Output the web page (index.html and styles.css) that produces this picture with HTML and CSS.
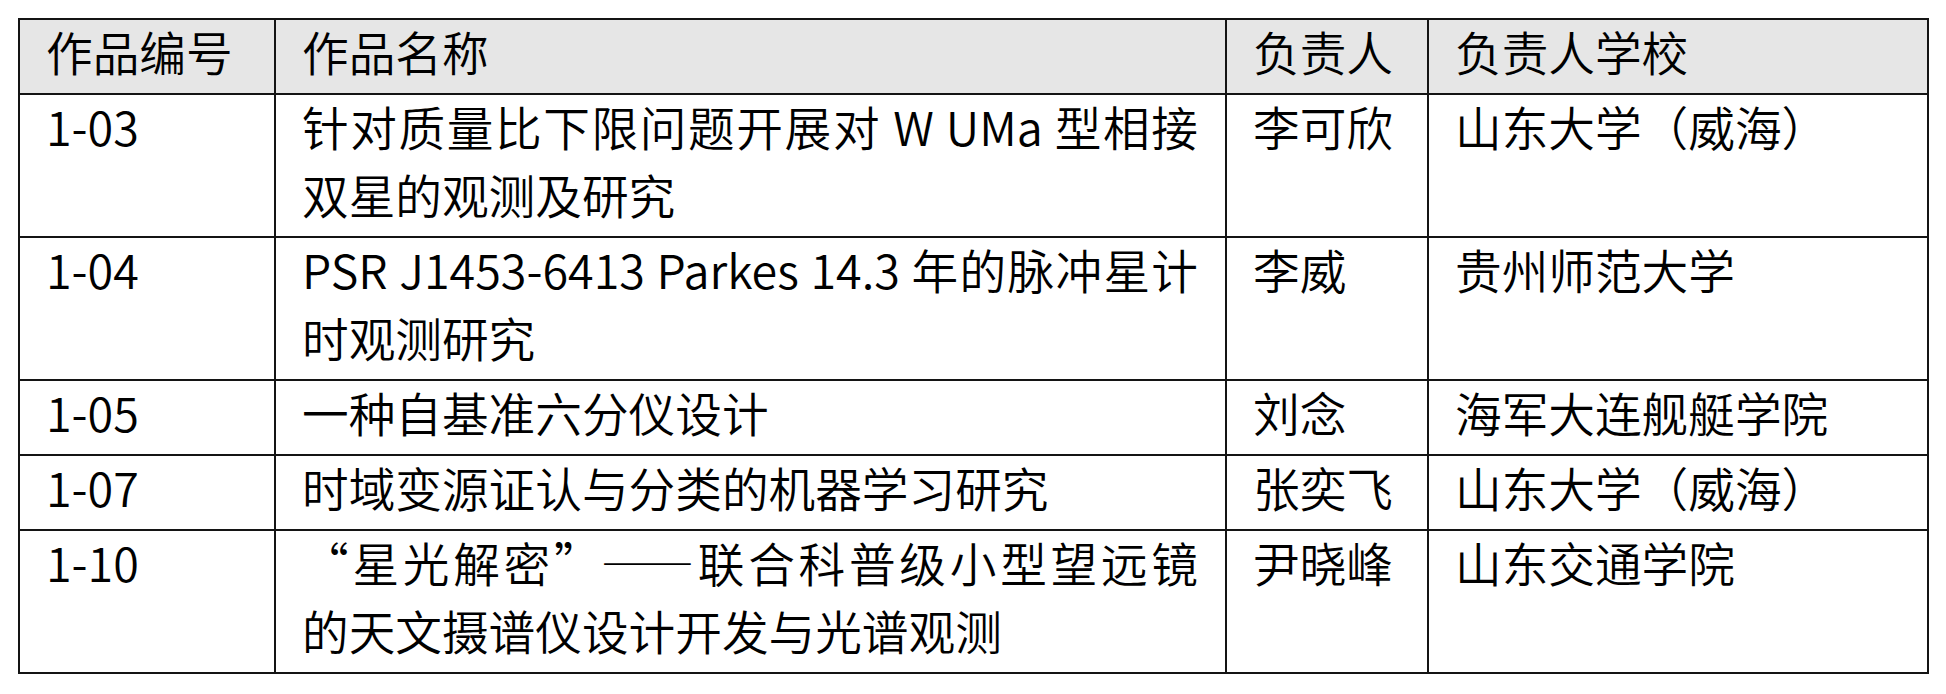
FILE: index.html
```html
<!DOCTYPE html>
<html lang="zh-CN">
<head>
<meta charset="utf-8">
<title>作品列表</title>
<link rel="stylesheet" href="styles.css">
</head>
<body>
<div class="table" role="table">
  <div class="cell head" role="columnheader"><div class="txt">作品编号</div></div>
  <div class="cell head" role="columnheader"><div class="txt">作品名称</div></div>
  <div class="cell head" role="columnheader"><div class="txt">负责人</div></div>
  <div class="cell head" role="columnheader"><div class="txt">负责人学校</div></div>

  <div class="cell"><div class="txt">1-03</div></div>
  <div class="cell"><div class="txt"><span class="jline">针对质量比下限问题开展对 W UMa 型相接</span><span class="line">双星的观测及研究</span></div></div>
  <div class="cell"><div class="txt">李可欣</div></div>
  <div class="cell"><div class="txt">山东大学（威海）</div></div>

  <div class="cell"><div class="txt">1-04</div></div>
  <div class="cell"><div class="txt"><span class="jline">PSR J1453-6413 Parkes 14.3 年的脉冲星计</span><span class="line">时观测研究</span></div></div>
  <div class="cell"><div class="txt">李威</div></div>
  <div class="cell"><div class="txt">贵州师范大学</div></div>

  <div class="cell"><div class="txt">1-05</div></div>
  <div class="cell"><div class="txt">一种自基准六分仪设计</div></div>
  <div class="cell"><div class="txt">刘念</div></div>
  <div class="cell"><div class="txt">海军大连舰艇学院</div></div>

  <div class="cell"><div class="txt">1-07</div></div>
  <div class="cell"><div class="txt">时域变源证认与分类的机器学习研究</div></div>
  <div class="cell"><div class="txt">张奕飞</div></div>
  <div class="cell"><div class="txt">山东大学（威海）</div></div>

  <div class="cell"><div class="txt">1-10</div></div>
  <div class="cell"><div class="txt"><span class="jline"><span class="fw">“</span>星光解密<span class="fw">”</span>——联合科普级小型望远镜</span><span class="line">的天文摄谱仪设计开发与光谱观测</span></div></div>
  <div class="cell"><div class="txt">尹晓峰</div></div>
  <div class="cell"><div class="txt">山东交通学院</div></div>
</div>
</body>
</html>
```
FILE: styles.css
```css
html, body {
  margin: 0;
  padding: 0;
  background: #ffffff;
}

body {
  font-family: "Noto Sans CJK SC", "Noto Sans", sans-serif;
  color: #000000;
}

.table {
  display: grid;
  grid-template-columns: 256px 951px 202px 500px;
  width: max-content;
  margin: 18px 0 0 18px;
  border-left: 2px solid #141414;
  border-top: 2px solid #141414;
}

.cell {
  box-sizing: border-box;
  border-right: 2px solid #141414;
  border-bottom: 2px solid #141414;
  padding: 0 27px 5px 26px;
  font-size: 46.67px;
  line-height: 68px;
  font-weight: 350;
}

.head {
  background: #e6e6e6;
}

.txt {
  margin: -3px 0 3px 0;
}

.line,
.jline {
  display: block;
}

.jline {
  text-align: justify;
  text-align-last: justify;
}

.fw {
  font-variant-east-asian: full-width;
}
```
